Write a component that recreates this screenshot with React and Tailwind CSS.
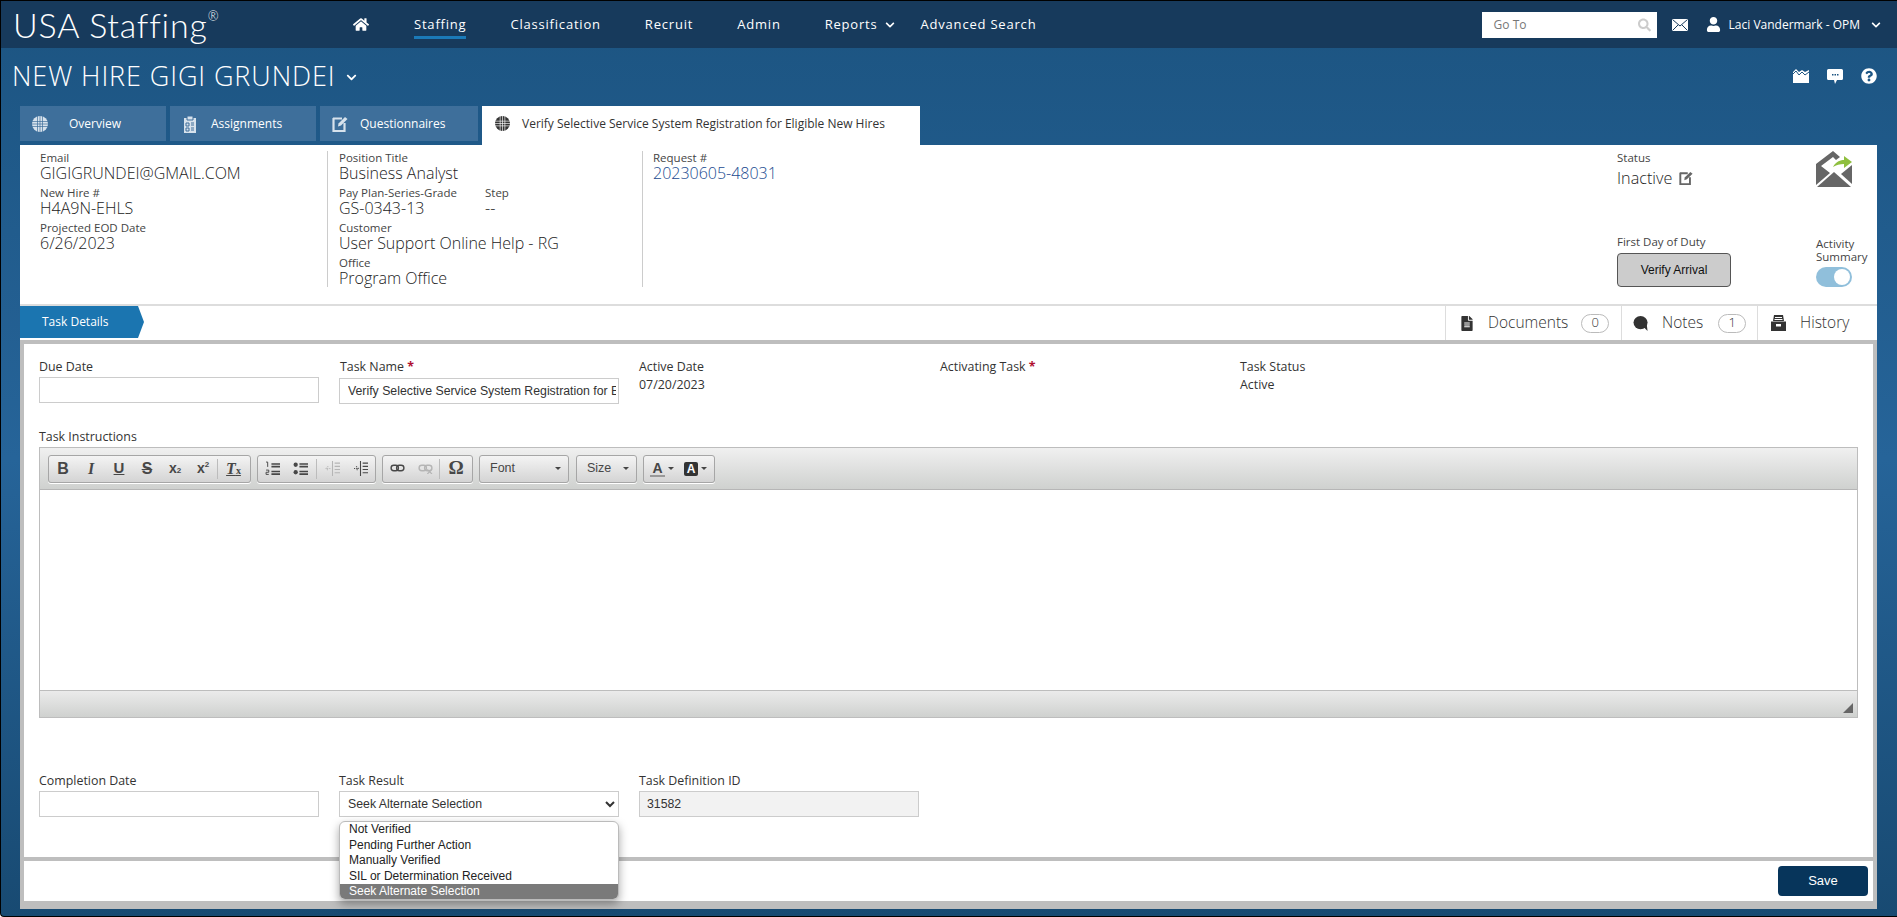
import React from "react";
import { FaHome, FaUser, FaSearch, FaQuestionCircle, FaFileAlt, FaChevronDown } from "react-icons/fa";

const ui = "font-['Open_Sans',sans-serif]";
const arial = "font-['Liberation_Sans',Arial,sans-serif]";

const MailIcon = ({ className }) => (
  <svg viewBox="0 0 16 12" className={className}>
    <path d="M0 0h16v12H0z" fill="#fff" />
    <path d="M.5.5 8 7 15.500.5M.5 11.500 6 6M15.500 11.500 10 6" fill="none" stroke="#173a5c" strokeWidth="1" />
  </svg>
);

// white body with a jagged top, looks like a crown
const OpenMailIcon = ({ className }) => (
  <svg viewBox="0 0 16 14" className={className}>
    <path d="M0 3l3-3 3 3 3-2 3 2 4-2v13H0z" fill="#fff" />
    <path d="M0 5l3-3 3 4 3-3 3 3 4-3" fill="none" stroke="#1c5481" strokeWidth="1" />
  </svg>
);

const BubbleIcon = ({ className }) => (
  <svg viewBox="0 0 16 15" className={className}>
    <path d="M1.500 0h13A1.500 1.500 0 0 1 16 1.500v8a1.500 1.500 0 0 1-1.500 1.500H10l-2 4-1-4H1.500A1.500 1.500 0 0 1 0 9.500v-8A1.500 1.500 0 0 1 1.500 0z" fill="#fff" />
    <path d="M5 5h1.500v1.500H5zM7.500 5H9v1.500H7.500zM10 5h1.500v1.500H10z" fill="#1c5481" />
  </svg>
);

const GlobeIcon = ({ className, fill = "#d7e2ec", line = "#3e6f9b" }) => (
  <svg viewBox="0 0 16 16" className={className}>
    <circle cx="8" cy="8" r="8" fill={fill} />
    <path d="M0 5.500h16M0 8h16M0 10.500h16M5.500 0v16M8 0v16M10.500 0v16" stroke={line} strokeWidth=".7" />
  </svg>
);

const NoteIcon = ({ className }) => (
  <svg viewBox="0 0 16 16" className={className}>
    <ellipse cx="7.500" cy="7" rx="7.500" ry="7" fill="#333" />
    <path d="M10 11l5 5-1-8z" fill="#333" />
  </svg>
);

const BoxIcon = ({ className }) => (
  <svg viewBox="0 0 15 16" className={className}>
    <path d="M3 0h9l1 6H2z" fill="#333" />
    <path d="M4 2h7v1H4zM3.500 4h8v1h-8z" fill="#fff" />
    <path d="M0 6.500h15V16H0z" fill="#333" />
    <path d="M5 9h5v2.500H5z" fill="#fff" />
  </svg>
);

const ClipboardIcon = () => (
  <svg viewBox="0 0 14 18" className="w-[14px] h-[18px]">
    <path d="M1 3h12v15H1z" fill="#d7e2ec" />
    <path d="M4 1h6v4H4z" fill="#d7e2ec" stroke="#3e6f9b" strokeWidth="1" />
    <path d="M3 8h3v3H3zM8 8h3M8 10h3M3 13h3v3H3zM8 13h3M8 15h3" fill="none" stroke="#3e6f9b" strokeWidth="1" />
  </svg>
);

const EditBoxIcon = ({ className, color = "#d7e2ec" }) => (
  <svg viewBox="0 0 16 16" className={className}>
    <path d="M1 2.500h9M1.500 2v13h11V7" fill="none" stroke={color} strokeWidth="2.200" />
    <path d="M6 10.500l.5-3L13 1l2.500 2-6.500 6.500z" fill={color} />
  </svg>
);

const EnvelopeStatus = () => (
  <svg viewBox="0 0 36 36" className="w-[36px] h-[36px]">
    <path d="M0 13 17 0l7 6-4 3-3-3L5 15l9 7L0 34z" fill="#666" />
    <path d="M36 14v19L25 23z" fill="#666" />
    <path d="M1 36l17-15 17 15z" fill="#666" />
    <path d="M17 16c3-6 8-7 11-7V5l8 6-8 6v-4c-4 0-8 1-11 3z" fill="#8fbf3f" />
  </svg>
);

const Sep = ({ className = "" }) => <span className={`shrink-0 w-px h-[20px] bg-[#bcbcbc] ${className}`} />;

const ToolBtn = ({ children, className = "" }) => (
  <span className={`shrink-0 w-[28px] h-full flex items-center justify-center text-[#474747] ${className}`}>{children}</span>
);

const ListIcon = ({ kind, off }) => {
  const c = off ? "#b5b5b5" : "#474747";
  return (
    <svg viewBox="0 0 14 14" className="w-[15px] h-[15px]">
      {kind === "ol" && (
        <>
          <path d="M1 1h1.500v4.500M1 8.500h2.500v2H1v2h2.500" fill="none" stroke={c} strokeWidth=".9" />
          <path d="M6 2h8v1.500H6zM6 4.500h8V6H6zM6 9h8v1.500H6zM6 11.500h8V13H6z" fill={c} />
        </>
      )}
      {kind === "ul" && (
        <>
          <circle cx="2.500" cy="3.500" r="2" fill={c} />
          <circle cx="2.500" cy="10.500" r="2" fill={c} />
          <path d="M6 2h8v1.500H6zM6 4.500h8V6H6zM6 9h8v1.500H6zM6 11.500h8V13H6z" fill={c} />
        </>
      )}
      {kind === "out" && (
        <>
          <path d="M7 0v14" stroke={c} strokeWidth="1" />
          <path d="M9 2h5M9 5h5M9 8h5M9 11h5" stroke={c} strokeWidth="1" />
          <path d="M5 7H1m2-2L1 7l2 2" fill="none" stroke={c} strokeWidth="1" strokeDasharray="1 1" />
        </>
      )}
      {kind === "in" && (
        <>
          <path d="M7 0v14" stroke={c} strokeWidth="1" />
          <path d="M9 2h5M9 5h5M9 8h5M9 11h5" stroke={c} strokeWidth="1" />
          <path d="M1 7h4M3 5l2 2-2 2" fill="none" stroke={c} strokeWidth="1" strokeDasharray="1 1" />
        </>
      )}
    </svg>
  );
};

const LinkIcon = ({ off }) => {
  const c = off ? "#b5b5b5" : "#474747";
  return (
    <svg viewBox="0 0 16 12" className="w-[15px] h-[11px]">
      <rect x="1" y="2.500" width="8" height="6" rx="3" fill="none" stroke={c} strokeWidth="1.500" />
      <rect x="7" y="2.500" width="8" height="6" rx="3" fill="none" stroke={c} strokeWidth="1.500" />
      {off && <path d="M10 7l5 5m0-5-5 5" stroke={c} strokeWidth="1.300" />}
    </svg>
  );
};

const Caret = ({ className = "" }) => (
  <span className={`shrink-0 block w-0 h-0 border-x-[3px] border-x-transparent border-t-[3px] border-t-[#444] ${className}`} />
);

const Group = ({ children, className = "" }) => (
  <div className={`h-[28px] flex items-center border border-[#a6a6a6] rounded-[3px] bg-gradient-to-b from-[#f4f4f4] to-[#d4d4d4] shadow-[0_1px_0_#fff] ${className}`}>
    {children}
  </div>
);

const Info = ({ label, value, link, className = "" }) => (
  <div className={`h-[35px] ${className}`}>
    <div className="text-[11.500px] leading-[14px] text-[#444] whitespace-nowrap">{label}</div>
    <div className={`-mt-[1px] text-[16px] leading-[18px] font-light whitespace-nowrap ${link ? "text-[#1a4a90]" : "text-[#222]"}`}>{value}</div>
  </div>
);

const Label = ({ children, req }) => (
  <div className="h-[16px] text-[12.400px] leading-[16px] text-[#333] whitespace-nowrap">
    {children}
    {req && <span className="text-[#b01030] font-bold"> *</span>}
  </div>
);

const fieldCls = `block mt-[2px] w-[280px] h-[26px] border border-[#ccc] text-[12.300px] text-[#333] outline-none ${arial}`;

export default function App() {
  return (
    <div className={`w-[1897px] h-[917px] box-border border-t border-l border-b border-black rounded-bl-[4px] overflow-hidden bg-gradient-to-b from-[#1c5481] via-[#266499] to-[#184a72] ${ui}`}>
      {/* top bar */}
      <div className="h-[47px] bg-[#173a5c] flex items-center text-white">
        <div className="w-[352px] pl-[12px] text-[34px] leading-[36px] font-light font-['Lato',sans-serif] tracking-[0.8px] whitespace-nowrap flex items-start">
          USA Staffing<span className="text-[13px] leading-[16px] mt-[1px]">®</span>
        </div>
        <nav className="flex items-center gap-[44px] text-[13px] font-medium tracking-[0.8px]">
          <FaHome className="w-[16px] h-[15px] -mr-[16px]" />
          <span className="relative ml-[17px]">
            Staffing
            <span className="absolute left-0 right-0 -bottom-[5px] h-[3px] bg-[#1b7ab8]" />
          </span>
          <span>Classification</span>
          <span>Recruit</span>
          <span>Admin</span>
          <span className="flex items-center gap-[7px] -mr-[18px]">
            Reports <FaChevronDown className="w-[10px] h-[10px]" />
          </span>
          <span>Advanced Search</span>
        </nav>
        <div className="ml-auto flex items-center">
          <div className="w-[175px] h-[26px] bg-white flex items-center justify-between pl-[12px] pr-[6px] text-[12px] text-[#777]">
            Go To
            <FaSearch className="w-[13px] h-[14px] text-[#ccc]" />
          </div>
          <MailIcon className="w-[16px] h-[12px] ml-[15px]" />
          <FaUser className="w-[15px] h-[15px] ml-[18px]" />
          <span className="ml-[8px] text-[12px] whitespace-nowrap">Laci Vandermark - OPM</span>
          <FaChevronDown className="w-[10px] h-[10px] ml-[11px] mr-[16px]" />
        </div>
      </div>

      {/* page title */}
      <div className="h-[58px] flex items-center text-white">
        <div className="flex items-center pl-[11px] pb-[3px]">
          <span className="text-[27px] font-light tracking-[0.9px] whitespace-nowrap leading-[30px]">NEW HIRE GIGI GRUNDEI</span>
          <FaChevronDown className="w-[11px] h-[11px] ml-[11px] mt-[4px]" />
        </div>
        <div className="ml-auto flex items-center gap-[18px] pr-[20px] pb-[2px]">
          <OpenMailIcon className="w-[16px] h-[14px]" />
          <BubbleIcon className="w-[16px] h-[15px]" />
          <FaQuestionCircle className="w-[16px] h-[16px]" />
        </div>
      </div>

      {/* tabs */}
      <div className="ml-[19px] h-[39px] flex items-start text-[12px] font-medium text-white">
        <div className="w-[146px] h-[35px] bg-[#3e6f9b] flex items-center pl-[12px]">
          <GlobeIcon className="w-[16px] h-[16px]" />
          <span className="ml-[21px]">Overview</span>
        </div>
        <div className="ml-[4px] w-[146px] h-[35px] bg-[#3e6f9b] flex items-center pl-[13px]">
          <ClipboardIcon />
          <span className="ml-[14px]">Assignments</span>
        </div>
        <div className="ml-[4px] w-[158px] h-[35px] bg-[#3e6f9b] flex items-center pl-[12px]">
          <EditBoxIcon className="w-[16px] h-[16px]" />
          <span className="ml-[12px]">Questionnaires</span>
        </div>
        <div className="ml-[4px] w-[438px] h-[39px] bg-white flex items-center pl-[13px] text-[#333] font-normal pb-[4px]">
          <GlobeIcon className="w-[15px] h-[15px]" fill="#333" line="#fff" />
          <span className="ml-[12px] text-[12px] whitespace-nowrap">Verify Selective Service System Registration for Eligible New Hires</span>
        </div>
      </div>

      {/* main panel */}
      <div className="ml-[19px] w-[1857px] bg-white">
        <div className="h-[161px] border-b-2 border-[#ddd] flex pl-[20px] pt-[6px]">
          <div className="w-[287px]">
            <Info label="Email" value="GIGIGRUNDEI@GMAIL.COM" />
            <Info label="New Hire #" value="H4A9N-EHLS" />
            <Info label="Projected EOD Date" value="6/26/2023" />
          </div>
          <div className="w-[315px] h-[136px] border-l border-[#ccc] pl-[11px]">
            <Info label="Position Title" value="Business Analyst" />
            <div className="flex">
              <Info label="Pay Plan-Series-Grade" value="GS-0343-13" className="w-[146px]" />
              <Info label="Step" value="--" />
            </div>
            <Info label="Customer" value="User Support Online Help - RG" />
            <Info label="Office" value="Program Office" />
          </div>
          <div className="w-[975px] h-[136px] border-l border-[#ccc] pl-[10px]">
            <Info label="Request #" value="20230605-48031" link />
          </div>
          <div className="w-[199px] flex flex-col h-[136px]">
            <div className="text-[11.500px] leading-[14px] text-[#444]">Status</div>
            <div className="flex items-center gap-[7px] text-[16.200px] leading-[22px] mt-[2px] font-light text-[#222]">
              Inactive <EditBoxIcon className="w-[14px] h-[14px]" color="#666" />
            </div>
            <div className="mt-auto text-[11.500px] leading-[14px] text-[#444]">First Day of Duty</div>
            <div className={`mt-[4px] w-[114px] h-[34px] bg-[#ccc] border border-[#555] rounded-[4px] flex items-center justify-center text-[12px] text-[#111] ${arial}`}>
              Verify Arrival
            </div>
          </div>
          <div className="flex flex-col h-[136px]">
            <EnvelopeStatus />
            <div className="mt-auto text-[11.500px] leading-[13px] text-[#444]">
              Activity
              <br />
              Summary
            </div>
            <div className="mt-[4px] w-[36px] h-[20px] rounded-full bg-[#90bfdb] flex items-center justify-end pr-[2px]">
              <span className="w-[16px] h-[16px] bg-white rounded-full" />
            </div>
          </div>
        </div>

        {/* section tabs */}
        <div className="h-[34px] flex items-start">
          <div className="w-[124px] h-[32px] bg-[#1b75b0] [clip-path:polygon(0_0,118px_0,100%_50%,118px_100%,0_100%)] flex items-center pl-[22px] text-[12px] font-medium text-white">
            Task Details
          </div>
          <div className="ml-auto flex h-[34px] text-[15.500px] font-light text-[#333]">
            <div className="w-[176px] border-l border-[#ddd] flex items-center pl-[15px]">
              <FaFileAlt className="w-[12px] h-[15px] text-[#333]" />
              <span className="ml-[15px]">Documents</span>
              <span className="ml-[13px] w-[28px] h-[19px] rounded-full border border-[#bbb] flex items-center justify-center text-[13px]">0</span>
            </div>
            <div className="w-[136px] border-l border-[#ddd] flex items-center pl-[11px]">
              <NoteIcon className="w-[16px] h-[15px]" />
              <span className="ml-[13px]">Notes</span>
              <span className="ml-[15px] w-[28px] h-[19px] rounded-full border border-[#bbb] flex items-center justify-center text-[13px]">1</span>
            </div>
            <div className="w-[120px] border-l border-[#ddd] flex items-center pl-[13px]">
              <BoxIcon className="w-[15px] h-[16px]" />
              <span className="ml-[14px]">History</span>
            </div>
          </div>
        </div>

        {/* form frame */}
        <div className="h-[569px] bg-[#bebebe] pt-[4px] pl-[4px] pr-[4px] flex flex-col">
          <div className="h-[513px] bg-white pl-[15px] pt-[15px]">
            <div className="grid grid-cols-[280px_280px_280px_280px_280px] gap-x-[20px]">
              <div>
                <Label>Due Date</Label>
                <input className={`${fieldCls} bg-white px-[7px]`} />
              </div>
              <div className="ml-[1px]">
                <Label req>Task Name</Label>
                <input
                  className={`${fieldCls} bg-white pl-[8px] pr-[2px] -ml-[1px] translate-y-[1px]`}
                  readOnly
                  value="Verify Selective Service System Registration for Eligible New Hires"
                />
              </div>
              <div>
                <Label>Active Date</Label>
                <div className="text-[12.400px] leading-[16px] mt-[2px] text-[#333]">07/20/2023</div>
              </div>
              <div className="ml-[1px]">
                <Label req>Activating Task</Label>
              </div>
              <div className="ml-[1px]">
                <Label>Task Status</Label>
                <div className="text-[12.400px] leading-[16px] mt-[2px] text-[#333]">Active</div>
              </div>
            </div>

            <div className="mt-[26px]">
              <Label>Task Instructions</Label>
            </div>
            <div className="mt-[2px] w-[1819px] h-[271px] border border-[#bdbdbd] flex flex-col">
              <div className={`h-[42px] bg-gradient-to-b from-[#f0f0f0] to-[#cfd1cf] border-b border-[#b6b6b6] flex items-center pl-[8px] gap-[6px] ${arial}`}>
                <Group className="w-[203px]">
                  <ToolBtn className="font-bold text-[16px]">B</ToolBtn>
                  <ToolBtn className="italic font-['Liberation_Serif',serif] font-bold text-[16px]">I</ToolBtn>
                  <ToolBtn className="underline font-bold text-[15px]">U</ToolBtn>
                  <ToolBtn className="line-through font-bold text-[16px]">S</ToolBtn>
                  <ToolBtn className="font-bold text-[14px]">x<sub className="text-[8px]">2</sub></ToolBtn>
                  <ToolBtn className="font-bold text-[14px]">x<sup className="text-[8px]">2</sup></ToolBtn>
                  <Sep />
                  <ToolBtn className="italic underline font-['Liberation_Serif',serif] font-bold text-[16px] w-[31px]">T<sub className="not-italic text-[10px]">x</sub></ToolBtn>
                </Group>
                <Group className="w-[119px]">
                  <ToolBtn><ListIcon kind="ol" /></ToolBtn>
                  <ToolBtn><ListIcon kind="ul" /></ToolBtn>
                  <Sep className="mx-[2px]" />
                  <ToolBtn className="-ml-[1px]"><ListIcon kind="out" off /></ToolBtn>
                  <ToolBtn><ListIcon kind="in" /></ToolBtn>
                </Group>
                <Group className="w-[91px]">
                  <ToolBtn><LinkIcon /></ToolBtn>
                  <ToolBtn><LinkIcon off /></ToolBtn>
                  <Sep />
                  <ToolBtn className="font-['Liberation_Serif',serif] font-bold text-[19px] w-[32px]">Ω</ToolBtn>
                </Group>
                <Group className="w-[90px] justify-between pl-[10px] pr-[7px] text-[12.500px] text-[#474747]">
                  Font <Caret />
                </Group>
                <Group className="ml-[1px] w-[61px] justify-between pl-[10px] pr-[7px] text-[12.500px] text-[#474747]">
                  Size <Caret />
                </Group>
                <Group className="w-[72px] pl-[6px]">
                  <span className="w-[15px] text-center text-[14px] font-bold leading-[14px] text-[#474747] border-b-[2px] border-[#999]">A</span>
                  <Caret className="ml-[3px]" />
                  <span className="ml-[10px] w-[14px] h-[14px] rounded-[2px] bg-[#333] text-white text-[12px] font-bold leading-[14px] text-center">A</span>
                  <Caret className="ml-[3px]" />
                </Group>
              </div>
              <div className="flex-1 bg-white" />
              <div className="relative h-[27px] bg-gradient-to-b from-[#ebebeb] to-[#cfd1cf] border-t border-[#bdbdbd]">
                <span className="absolute right-[4px] bottom-[4px] w-0 h-0 border-l-[10px] border-l-transparent border-b-[10px] border-b-[#666]" />
              </div>
            </div>

            <div className="mt-[55px] flex gap-[20px]">
              <div>
                <Label>Completion Date</Label>
                <input className={`${fieldCls} bg-white px-[7px]`} />
              </div>
              <div className="relative">
                <Label>Task Result</Label>
                <select className={`${fieldCls} bg-white px-[4px]`} defaultValue="Seek Alternate Selection">
                  <option>Not Verified</option>
                  <option>Pending Further Action</option>
                  <option>Manually Verified</option>
                  <option>SIL or Determination Received</option>
                  <option>Seek Alternate Selection</option>
                </select>
                <div className={`absolute z-10 left-0 top-[48px] w-[280px] h-[79px] rounded-[6px] border border-[#bbb] bg-white overflow-hidden shadow-[0_4px_10px_rgba(0,0,0,0.35)] text-[12px] leading-[15.500px] text-[#222] ${arial}`}>
                  <div className="pl-[9px]">Not Verified</div>
                  <div className="pl-[9px]">Pending Further Action</div>
                  <div className="pl-[9px]">Manually Verified</div>
                  <div className="pl-[9px]">SIL or Determination Received</div>
                  <div className="pl-[9px] bg-[#7a7a7a] text-white">Seek Alternate Selection</div>
                </div>
              </div>
              <div>
                <Label>Task Definition ID</Label>
                <input className={`${fieldCls} bg-[#f2f2f2] px-[7px]`} readOnly value="31582" />
              </div>
            </div>
          </div>
          <div className="mt-[4px] h-[40px] bg-white flex items-center justify-end pr-[5px]">
            <div className={`w-[90px] h-[30px] rounded-[4px] bg-[#07355b] flex items-center justify-center text-[13px] text-white ${arial}`}>
              Save
            </div>
          </div>
        </div>
      </div>
    </div>
  );
}
